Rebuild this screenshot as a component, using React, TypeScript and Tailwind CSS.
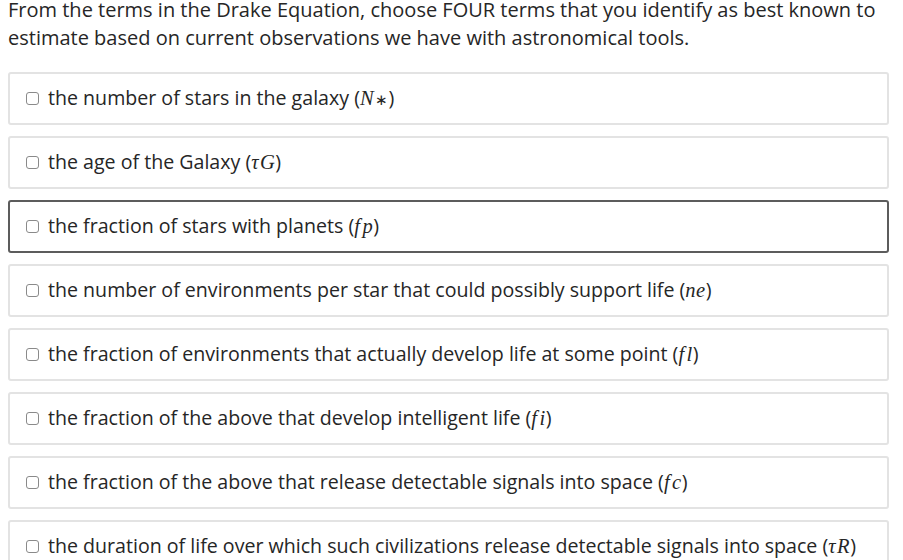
import React from "react";

const F = () => <i className="mr-[2px]">f</i>;

const items: { text: string; math: React.ReactNode; selected?: boolean }[] = [
  { text: "the number of stars in the galaxy", math: <><i>N</i><span className="not-italic text-[15px] ml-[1px]">∗</span></> },
  { text: "the age of the Galaxy", math: <><i className="mr-[1px]">τ</i><i>G</i></> },
  { text: "the fraction of stars with planets", math: <><F /><i>p</i></>, selected: true },
  { text: "the number of environments per star that could possibly support life", math: <i>ne</i> },
  { text: "the fraction of environments that actually develop life at some point", math: <><F /><i>l</i></> },
  { text: "the fraction of the above that develop intelligent life", math: <><F /><i>i</i></> },
  { text: "the fraction of the above that release detectable signals into space", math: <><F /><i>c</i></> },
  { text: "the duration of life over which such civilizations release detectable signals into space", math: <><i className="mr-[1px]">τ</i><i>R</i></> },
];

export default function App() {
  return (
    <div className="bg-white min-h-[560px] px-2 text-[#262626] overflow-hidden" style={{ fontFamily: '"Open Sans", sans-serif' }}>
      <p className="text-[20px] leading-[28px] w-[890px] -mt-[4px]">
        From the terms in the Drake Equation, choose FOUR terms that you identify as best known to estimate based on current observations we have with astronomical tools.
      </p>
      <div className="mt-[20px] flex flex-col gap-[11px] w-[881px]">
        {items.map((it, i) => (
          <div
            key={i}
            className={
              "h-[53px] shrink-0 rounded-[3px] border-2 flex items-center pl-[16px] " +
              (it.selected ? "border-[#5c5c5c]" : "border-[#e3e3e3]")
            }
          >
            <span className="w-[13px] h-[13px] rounded-[3px] border border-[#8a8a8a] bg-white shrink-0" />
            <span className="ml-[9px] text-[19.6px] whitespace-nowrap">
              {it.text} (
              <span className="text-[20.5px] tracking-[0.5px]" style={{ fontFamily: '"Liberation Serif", serif' }}>{it.math}</span>)
            </span>
          </div>
        ))}
      </div>
    </div>
  );
}
